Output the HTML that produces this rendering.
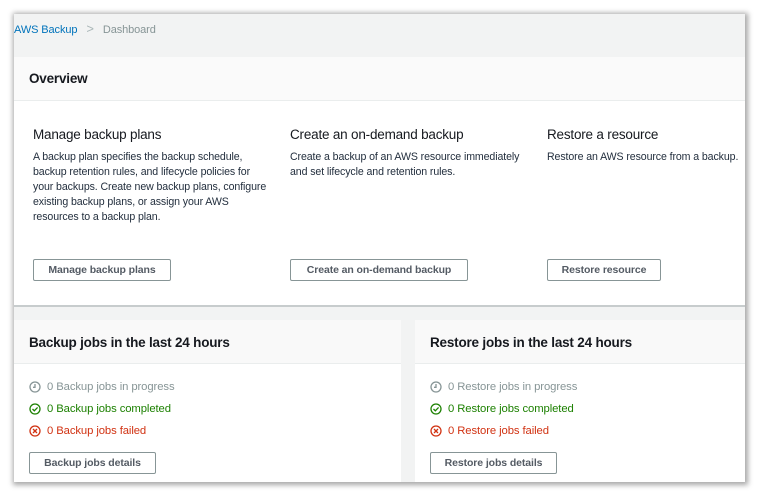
<!DOCTYPE html>
<html><head><meta charset="utf-8"><style>
*{margin:0;padding:0;box-sizing:border-box}
body{width:762px;height:496px;background:#fff;position:relative;overflow:hidden;font-family:"Liberation Sans",sans-serif;color:#16191f}
.frame{position:absolute;left:14px;top:14px;width:731px;height:468px;background:#f2f3f3;overflow:hidden;box-shadow:1px 1px 5px 2px rgba(0,0,0,.35)}
.abs{position:absolute;white-space:nowrap}
.crumb{left:0;top:7px;font-size:11px;letter-spacing:-.1px}
.panel{position:absolute;background:#fff}
.hdr{position:absolute;left:0;right:0;top:0;background:#fafafa;border-bottom:1px solid #eaeded}
h2{font-size:13.5px;font-weight:bold;letter-spacing:-.2px}
h3{font-size:13.5px;font-weight:normal;letter-spacing:-.2px}
p{font-size:10.6px;line-height:15px;color:#232f3e;letter-spacing:-.1px}
.btn{position:absolute;height:22px;border:1px solid #879596;border-radius:2px;background:#fff;font-size:10.5px;font-weight:bold;color:#545b64;text-align:center;line-height:20px;letter-spacing:-.1px}
.st{font-size:11.3px;letter-spacing:-.1px;display:flex;align-items:center;gap:6px}
svg{display:block}
</style></head><body>
<div class="frame">
  <div class="abs crumb"><span style="color:#0073bb">AWS Backup</span> <span style="color:#aab7b8;margin:0 6px;font-size:13px">&gt;</span> <span style="color:#879596">Dashboard</span></div>
  <div class="panel" style="left:0;top:43px;width:731px;height:250px;border-bottom:2px solid #c7cccd">
    <div class="hdr" style="height:44px"><h2 class="abs" style="left:15px;top:14px">Overview</h2></div>
    <h3 class="abs" style="left:19px;top:70px">Manage backup plans</h3>
    <p class="abs" style="left:19px;top:93px">A backup plan specifies the backup schedule,<br>backup retention rules, and lifecycle policies for<br>your backups. Create new backup plans, configure<br>existing backup plans, or assign your AWS<br>resources to a backup plan.</p>
    <h3 class="abs" style="left:276px;top:70px">Create an on-demand backup</h3>
    <p class="abs" style="left:276px;top:93px">Create a backup of an AWS resource immediately<br>and set lifecycle and retention rules.</p>
    <h3 class="abs" style="left:533px;top:70px">Restore a resource</h3>
    <p class="abs" style="left:533px;top:93px">Restore an AWS resource from a backup.</p>
    <div class="btn" style="left:19px;top:202px;width:138px">Manage backup plans</div>
    <div class="btn" style="left:276px;top:202px;width:178px">Create an on-demand backup</div>
    <div class="btn" style="left:533px;top:202px;width:114px">Restore resource</div>
  </div>
  <div class="panel" style="left:0;top:306px;width:387px;height:170px">
    <div class="hdr" style="height:44px;background:#f9f9f9"><h2 class="abs" style="left:15px;top:15px">Backup jobs in the last 24 hours</h2></div>
    <div class="abs st" style="left:15px;top:61px;color:#879596"><svg width="12" height="12" viewBox="0 0 12 12"><circle cx="6" cy="6" r="5" fill="none" stroke="#879596" stroke-width="1.3"/><path d="M6 3v3.3H4" fill="none" stroke="#879596" stroke-width="1.3"/></svg>0 Backup jobs in progress</div>
    <div class="abs st" style="left:15px;top:83px;color:#1d8102"><svg width="12" height="12" viewBox="0 0 12 12"><circle cx="6" cy="6" r="5" fill="none" stroke="#1d8102" stroke-width="1.3"/><path d="M3.5 6l1.8 1.8L8.6 4.4" fill="none" stroke="#1d8102" stroke-width="1.3"/></svg>0 Backup jobs completed</div>
    <div class="abs st" style="left:15px;top:105px;color:#d13212"><svg width="12" height="12" viewBox="0 0 12 12"><circle cx="6" cy="6" r="5" fill="none" stroke="#d13212" stroke-width="1.3"/><path d="M4 4l4 4M8 4l-4 4" fill="none" stroke="#d13212" stroke-width="1.3"/></svg>0 Backup jobs failed</div>
    <div class="btn" style="left:15px;top:132px;width:127px">Backup jobs details</div>
  </div>
  <div class="panel" style="left:401px;top:306px;width:330px;height:170px">
    <div class="hdr" style="height:44px;background:#f9f9f9"><h2 class="abs" style="left:15px;top:15px">Restore jobs in the last 24 hours</h2></div>
    <div class="abs st" style="left:15px;top:61px;color:#879596"><svg width="12" height="12" viewBox="0 0 12 12"><circle cx="6" cy="6" r="5" fill="none" stroke="#879596" stroke-width="1.3"/><path d="M6 3v3.3H4" fill="none" stroke="#879596" stroke-width="1.3"/></svg>0 Restore jobs in progress</div>
    <div class="abs st" style="left:15px;top:83px;color:#1d8102"><svg width="12" height="12" viewBox="0 0 12 12"><circle cx="6" cy="6" r="5" fill="none" stroke="#1d8102" stroke-width="1.3"/><path d="M3.5 6l1.8 1.8L8.6 4.4" fill="none" stroke="#1d8102" stroke-width="1.3"/></svg>0 Restore jobs completed</div>
    <div class="abs st" style="left:15px;top:105px;color:#d13212"><svg width="12" height="12" viewBox="0 0 12 12"><circle cx="6" cy="6" r="5" fill="none" stroke="#d13212" stroke-width="1.3"/><path d="M4 4l4 4M8 4l-4 4" fill="none" stroke="#d13212" stroke-width="1.3"/></svg>0 Restore jobs failed</div>
    <div class="btn" style="left:15px;top:132px;width:127px">Restore jobs details</div>
  </div>
</div>
</body></html>
